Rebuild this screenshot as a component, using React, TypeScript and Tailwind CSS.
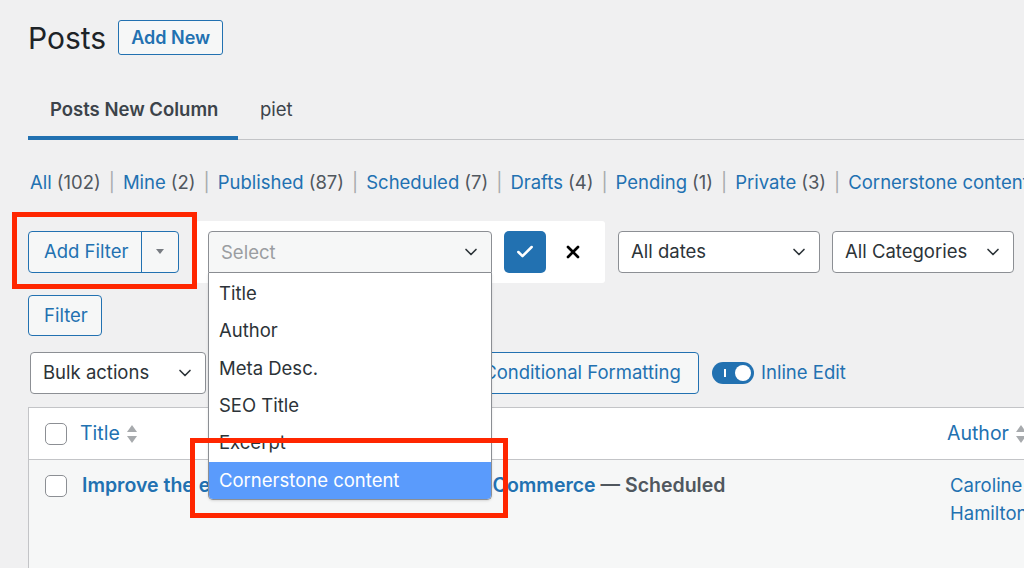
import { Check, X, ChevronDown } from 'lucide-react';

const VIEWS = [
  { label: 'All', count: 102 },
  { label: 'Mine', count: 2 },
  { label: 'Published', count: 87 },
  { label: 'Scheduled', count: 7 },
  { label: 'Drafts', count: 4 },
  { label: 'Pending', count: 1 },
  { label: 'Private', count: 3 },
  { label: 'Cornerstone content', count: 5 },
];

const FILTER_FIELDS = ['Title', 'Author', 'Meta Desc.', 'SEO Title', 'Excerpt', 'Cornerstone content'];

function SortArrows() {
  return (
    <svg width="12" height="22" viewBox="0 0 12 22" className="shrink-0">
      <path d="M6 2 L11 9 L1 9 Z" fill="#a7aaad" />
      <path d="M6 20 L11 13 L1 13 Z" fill="#a7aaad" />
    </svg>
  );
}

function Checkbox() {
  return <span className="block h-[22px] w-[22px] shrink-0 rounded-[5px] border-[1.5px] border-[#8c8f94] bg-white" />;
}

function SelectBox({ label, className }: { label: string; className: string }) {
  return (
    <div className={'flex h-[42px] items-center justify-between rounded-[4px] border border-[#8c8f94] bg-white pl-[12px] pr-[10px] text-[18.5px] text-[#2c3338] ' + className}>
      <span>{label}</span>
      <ChevronDown size={20} strokeWidth={2} color="#2c3338" />
    </div>
  );
}

export default function App() {
  return (
    <div className="relative h-[568px] w-[1024px] overflow-hidden whitespace-nowrap bg-[#f0f0f1] font-[Inter,sans-serif] text-[#3c434a]">
      <div className="w-[1140px] pl-[28px]">
        {/* Heading */}
        <div className="mt-[20px] flex h-[35px] items-center">
          <h1 className="text-[30px] leading-none text-[#1d2327]">Posts</h1>
          <button className="ml-[12px] h-[35px] rounded-[3px] border border-[#2271b1] bg-[#f6f7f7] px-[12px] text-[18px] font-semibold text-[#2271b1]">
            Add New
          </button>
        </div>

        {/* Tabs */}
        <div className="mt-[29px] flex border-b border-[#c3c4c7]">
          <div className="-mb-px flex h-[56px] w-[210px] items-center border-b-[4px] border-[#2271b1] pl-[22px] text-[18.5px] font-semibold text-[#3c434a]">
            Posts New Column
          </div>
          <div className="-mb-px flex h-[56px] items-center border-b-[4px] border-transparent pl-[22px] text-[18.5px] text-[#3c434a]">
            piet
          </div>
        </div>

        {/* Views */}
        <div className="ml-[2px] mt-[30px] flex h-[24px] items-center text-[18.5px] leading-[24px]">
          {VIEWS.map((v, i) => (
            <span key={v.label} className="flex items-center">
              {i > 0 && <span className="mx-[8px] text-[#a7aaad]">|</span>}
              <span className="text-[#2271b1]">{v.label}</span>
              <span className="ml-[5px] text-[#50575e]">({v.count})</span>
            </span>
          ))}
        </div>

        {/* Filter builder row */}
        <div className="mt-[27px] flex h-[62px] items-center">
          <div className="flex h-[42px] w-[151px] rounded-[4px] border border-[#2271b1] bg-[#f6f7f7] text-[18.5px] text-[#2271b1]">
            <span className="flex w-[113px] items-center border-r border-[#2271b1] pl-[15px]">Add Filter</span>
            <span className="flex flex-1 items-center justify-center">
              <svg width="8" height="6" viewBox="0 0 8 6"><path d="M0 0 L8 0 L4 5 Z" fill="#787c82" /></svg>
            </span>
          </div>

          <div className="ml-[17px] flex h-[62px] w-[409px] items-center rounded-[3px] bg-white pl-[12px]">
            <div className="relative w-[284px]">
              <div className="flex h-[42px] items-center justify-between rounded-t-[4px] border border-[#8c8f94] bg-[#f6f7f7] pl-[12px] pr-[10px] text-[18.5px] text-[#9a9da1]">
                <span className="mt-[2px]">Select</span>
                <ChevronDown size={20} strokeWidth={2} color="#2c3338" />
              </div>
              <ul className="absolute left-0 top-full z-20 w-full rounded-b-[5px] border border-t-0 border-[#8c8f94] bg-white pt-[2px] text-[18.5px] text-[#2c3338] shadow-sm">
                {FILTER_FIELDS.map((f, i) => (
                  <li
                    key={f}
                    className={
                      'flex h-[37.4px] items-center pl-[10px] ' +
                      (i === FILTER_FIELDS.length - 1 ? 'rounded-b-[4px] bg-[#5a9bfc] text-white' : '')
                    }
                  >
                    {f}
                  </li>
                ))}
              </ul>
            </div>
            <button className="ml-[12px] flex h-[42px] w-[42px] items-center justify-center rounded-[5px] bg-[#2271b1]">
              <Check size={20} strokeWidth={3} color="#fff" />
            </button>
            <span className="ml-[17px] flex items-center">
              <X size={20} strokeWidth={3.2} color="#000" />
            </span>
          </div>

          <SelectBox label="All dates" className="ml-[13px] w-[202px]" />
          <SelectBox label="All Categories" className="ml-[12px] w-[182px]" />
        </div>

        <button className="mt-[12px] h-[41px] w-[74px] rounded-[4px] border border-[#2271b1] bg-[#f6f7f7] pl-[15px] text-left text-[18.5px] text-[#2271b1]">
          Filter
        </button>

        {/* Bulk actions row */}
        <div className="mt-[16px] flex h-[41px] items-center">
          <SelectBox label="Bulk actions" className="ml-[2px] h-[41px] w-[176px]" />
          <button className="ml-[8px] h-[41px] w-[76px] rounded-[4px] border border-[#2271b1] bg-[#f6f7f7] text-[18.5px] text-[#2271b1]">
            Apply
          </button>
          <button className="ml-[175px] h-[42px] w-[234px] rounded-[4px] border border-[#2271b1] bg-[#f6f7f7] text-[18.5px] text-[#2271b1]">
            Conditional Formatting
          </button>
          <span className="ml-[13px] flex h-[22px] w-[42px] items-center justify-between rounded-full bg-[#2271b1] px-[3px]">
            <span className="ml-[9px] h-[8px] w-[2px] bg-white" />
            <span className="h-[16px] w-[16px] rounded-full bg-white" />
          </span>
          <span className="ml-[7px] text-[18.5px] text-[#2271b1]">Inline Edit</span>
        </div>

        {/* Posts table */}
        <div className="mt-[14px] border border-[#c3c4c7] bg-white">
          <div className="flex h-[52px] items-center border-b border-[#c3c4c7]">
            <span className="ml-[16px]"><Checkbox /></span>
            <span className="ml-[13px] flex flex-1 items-center gap-[6px] text-[19.5px] text-[#2271b1]">
              Title <SortArrows />
            </span>
            <span className="flex w-[192px] items-center gap-[6px] text-[19.5px] text-[#2271b1]">
              Author <SortArrows />
            </span>
          </div>
          <div className="flex h-[120px] items-start bg-[#f6f7f7] pt-[13px]">
            <span className="ml-[16px] mt-[2px]"><Checkbox /></span>
            <span className="ml-[15px] flex-1 text-[19.5px] font-semibold leading-[24px]">
              <span className="text-[#2271b1]">Improve the ecommerce experience of WooCommerce</span>
              <span className="text-[#50575e]"> — Scheduled</span>
            </span>
            <span className="-mt-[2px] flex w-[189px] flex-col text-[18.5px] leading-[28px] text-[#2271b1]">
              <span>Caroline</span>
              <span>Hamilton</span>
            </span>
          </div>
        </div>
      </div>

      {/* Annotation boxes */}
      <div className="pointer-events-none absolute left-[12px] top-[212px] z-30 h-[77px] w-[185px] border-[5px] border-[#ff2600]" />
      <div className="pointer-events-none absolute left-[190px] top-[438px] z-30 h-[80px] w-[318px] border-[5px] border-[#ff2600]" />
    </div>
  );
}
